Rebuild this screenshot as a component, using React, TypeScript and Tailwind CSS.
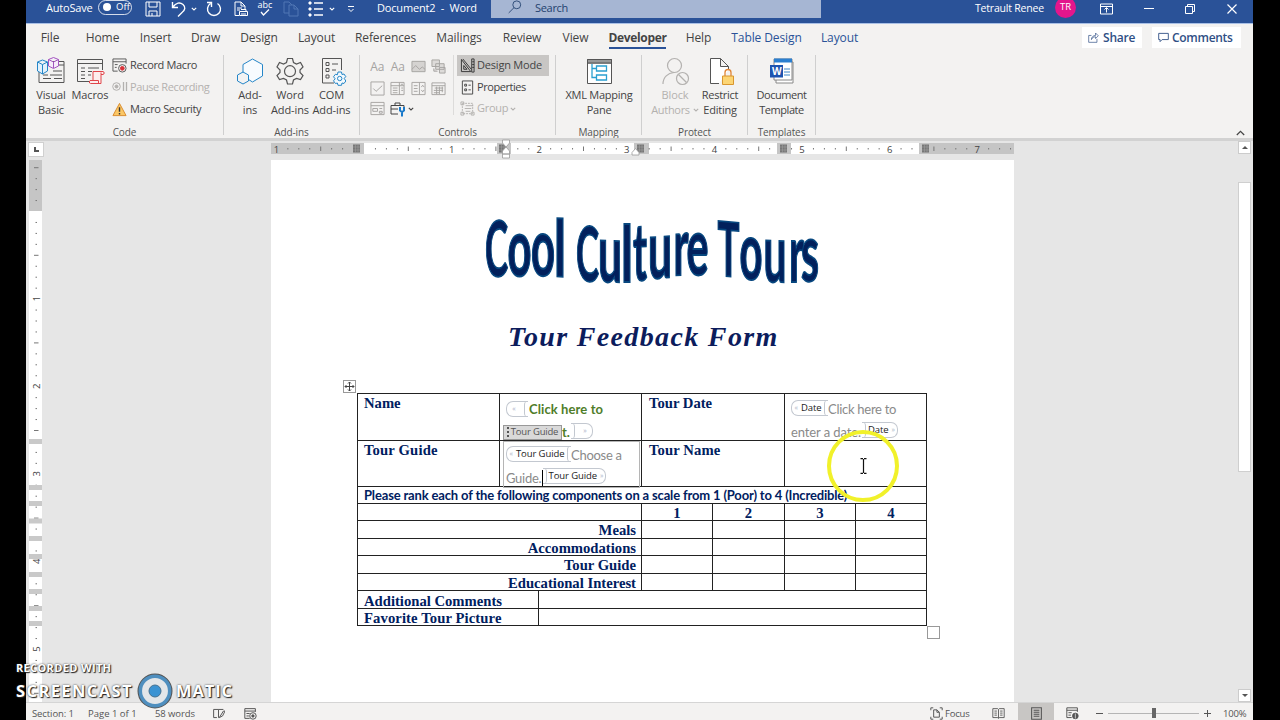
import React from 'react';

type IconProps = { className?: string; children: React.ReactNode; box?: string };

const Icon: React.FC<IconProps> = ({ className = '', children, box = '0 0 16 16' }) => (
   <svg
      viewBox={box}
      fill="none"
      stroke="currentColor"
      className={`shrink-0 ${className}`}
   >
      {children}
   </svg>
);

const Chevron: React.FC<{ className?: string }> = ({ className = '' }) => (
   <Icon box="0 0 6 6" className={`size-[6px] ${className}`}>
      <path d="M.8 1.8 3 4l2.2-2.2" strokeWidth="1.1" />
   </Icon>
);

// ---------- title bar ----------
const TitleBar: React.FC = () => (
   <div className="h-[24px] bg-[#2a5298] border-b border-[#a9c0e6] text-white text-[11px] flex shrink-0">
      <div className="flex h-[17px] items-center w-[465px]">
         <span className="ml-[20px] w-[46px] leading-[14px] -mt-[2px] tracking-[-0.2px] whitespace-nowrap">AutoSave</span>
         <div className="ml-[6px] -mt-[3px] h-[15px] w-[34px] rounded-full border border-white/80 flex items-center pl-[4px] shrink-0">
            <span className="size-[8px] rounded-full bg-white" />
            <span className="ml-[5px] text-[9.5px] leading-[12px]">Off</span>
         </div>
         <Icon className="ml-[13px] size-[16px]">
            <path d="M1 1h14v14H1zM4 1v5h8V1M4 15v-5h8v5M7 12v3" />
         </Icon>
         <Icon className="ml-[10px] size-[16px]">
            <path d="M1.500 1v5.500H7M2 6C5 1.500 9 1 12 3.500s2 6-1 8L7 15.500" strokeWidth="1.4" />
         </Icon>
         <Chevron className="ml-[4px]" />
         <Icon className="ml-[9px] size-[16px]">
            <path d="M4.500 2.500A6.500 6.500 0 1 0 11.500 2.500M1 1.500h4.500V6" strokeWidth="1.4" />
         </Icon>
         <Icon className="ml-[11px] size-[16px]">
            <path d="M6 14.500H2V1h6l4 4v3M8 1v4h4M4 7h5M4 9h3" />
            <path d="M6.500 10.500h8v4h-8zM8 8.500h5v2M8 13h5" />
         </Icon>
         <div className="ml-[9px] w-[14px] flex flex-col items-center">
            <span className="text-[9px] leading-[8px]">abc</span>
            <Icon box="0 0 10 7" className="h-[7px] w-[10px]">
               <path d="m1 3 2.500 3L9 .5" strokeWidth="1.300" />
            </Icon>
         </div>
         <Icon className="ml-[11px] size-[16px] text-[#5076b4]">
            <path d="M6 12H1V1h5l3 3M6 4h5l4 4v7H6zM11 4v4h4" />
         </Icon>
         <Icon className="ml-[9px] size-[16px]">
            <path d="M6 2h9M6 8h9M6 14h9" strokeWidth="1.4" />
            <path d="M1 1h2v2H1zM1 7h2v2H1zM1 13h2v2H1z" fill="currentColor" />
         </Icon>
         <Chevron className="ml-[5px]" />
         <Icon box="0 0 8 8" className="ml-[12px] size-[8px]">
            <path d="M1 1.500h6M1.500 4 4 6.500 6.500 4" />
         </Icon>
         <span className="ml-[22px] whitespace-nowrap leading-[14px] -mt-[2px] tracking-[-0.170px]">
            Document2&nbsp; -&nbsp; Word
         </span>
      </div>
      <div className="h-[18px] w-[330px] bg-[#a6b6d3] text-[#24426f] flex pl-[17px] shrink-0">
         <Icon className="size-[14px]">
            <circle cx="10" cy="5.500" r="4.500" />
            <path d="m6.800 8.800-6 6" />
         </Icon>
         <span className="ml-[13px] leading-[16px] tracking-[-0.300px]">Search</span>
      </div>
      <div className="ml-[154px] h-[17px] flex items-center">
         <span className="w-[69px] text-[10.500px] leading-[14px] -mt-[1px] tracking-[-0.200px] whitespace-nowrap">Tetrault Renee</span>
         <span className="ml-[11px] -mt-[2px] size-[21px] rounded-full bg-[#e3168c] text-[9.500px] flex items-center justify-center">
            TR
         </span>
         <Icon className="ml-[24px] h-[12px] w-[13px]" box="0 0 13 11">
            <path d="M.5.5h12v10H.5zM.5 3h12M6.500 9V4.500M4.500 6l2-2 2 2" />
         </Icon>
         <span className="ml-[31px] h-px w-[10px] bg-white" />
         <Icon className="ml-[31px] size-[10px]" box="0 0 10 10">
            <path d="M.5 2.500h7v7h-7zM2.500 2.500v-2h7v7h-2" />
         </Icon>
         <Icon className="ml-[32px] size-[10px]" box="0 0 10 10">
            <path d="m.5.5 9 9M9.500.5l-9 9" strokeWidth="1.200" />
         </Icon>
      </div>
   </div>
);

// ---------- tabs ----------
const tabs = [
   { name: 'File', cls: 'ml-[15px] w-[18px]' },
   { name: 'Home', cls: 'ml-[27px] w-[33px]' },
   { name: 'Insert', cls: 'ml-[21px] w-[31px]' },
   { name: 'Draw', cls: 'ml-[20px] w-[29px]' },
   { name: 'Design', cls: 'ml-[20px] w-[38px]' },
   { name: 'Layout', cls: 'ml-[20px] w-[37px]' },
   { name: 'References', cls: 'ml-[20px] w-[61px]' },
   { name: 'Mailings', cls: 'ml-[20px] w-[46px]' },
   { name: 'Review', cls: 'ml-[21px] w-[38px]' },
   { name: 'View', cls: 'ml-[21px] w-[27px]' },
   { name: 'Developer', cls: 'ml-[20px] w-[57px] font-bold tracking-[-0.35px] border-b-2 border-[#2a5298]' },
   { name: 'Help', cls: 'ml-[19px] w-[27px]' },
   { name: 'Table Design', cls: 'ml-[19px] w-[71px] text-[#2a5298]' },
   { name: 'Layout', cls: 'ml-[19px] w-[37px] text-[#2a5298]' },
];

const TabRow: React.FC = () => (
   <div className="h-[27px] flex shrink-0 text-[12px] text-[#444]">
      {tabs.map((tab, i) => (
         <div
            key={i}
            className={`h-[25px] leading-[28px] flex justify-center whitespace-nowrap tracking-[-0.1px] shrink-0 ${tab.cls}`}
         >
            {tab.name}
         </div>
      ))}
      <div className="ml-auto mt-[3px] mr-[12px] flex gap-[10px] text-[#2f4f85] font-semibold">
         <div className="h-[21px] w-[60px] bg-white flex items-center pl-[6px]">
            <Icon className="size-[11px]">
               <path d="M5 5H1v10h12v-5M5 11c0-4 3-6 6-6V1.500l4 4-4 4V7c-3 0-5 1-6 4z" />
            </Icon>
            <span className="ml-[4px] tracking-[-0.2px]">Share</span>
         </div>
         <div className="h-[21px] w-[89px] bg-white flex items-center pl-[6px]">
            <Icon className="size-[11px]">
               <path d="M1 2h14v9H6l-3 3v-3H1z" strokeWidth="1.300" />
            </Icon>
            <span className="ml-[3px] tracking-[-0.300px]">Comments</span>
         </div>
      </div>
   </div>
);

// ---------- ribbon ----------
type BigButtonProps = {
   lines: React.ReactNode[];
   className?: string;
   children: React.ReactNode;
};

const BigButton: React.FC<BigButtonProps> = ({ lines, className = '', children }) => (
   <div className={`flex flex-col items-center shrink-0 ${className}`}>
      <svg viewBox="0 0 30 30" fill="none" className="mt-[1px] size-[30px]">
         {children}
      </svg>
      <div className="mt-[2px] leading-[14.500px] text-center whitespace-nowrap">
         {lines.map((line, i) => (
            <p key={i}>{line}</p>
         ))}
      </div>
   </div>
);

type GroupProps = { label: string; className?: string; children: React.ReactNode };

const Group: React.FC<GroupProps> = ({ label, className = '', children }) => (
   <div className={`flex flex-col h-[80px] border-r border-[#cfcfcf] shrink-0 ${className}`}>
      <div className="flex h-[66px] shrink-0">{children}</div>
      <p className="mt-[4px] text-[10px] leading-[15px] text-center text-[#555]">{label}</p>
   </div>
);

const Ribbon: React.FC = () => (
   <div className="h-[87px] pt-[4px] flex shrink-0 text-[11px] tracking-[-0.100px] text-[#444]">
      <Group label="Code" className="w-[198px]">
         <BigButton lines={['Visual', 'Basic']} className="ml-[5px] w-[40px]">
            <path d="M3 12v14.500h25V5.500H17M12 9h16M17 15h9M7 19h5M14 19h12M7 22.500h8M18 22.500h8" stroke="#555" />
            <path d="m1.500 6 5-2 5 2v9l-5 3-5-3zM1.500 6l5 2.500 5-2.500M6.500 8.500V18" stroke="#2586c8" fill="#e3f1fb" />
            <path d="m12.500 3.500 5-2 5 2V10l-5 2.500-5-2.500zM12.500 3.500l5 2.500 5-2.500M17.500 6v6" stroke="#a355c0" fill="#f6ebfa" />
         </BigButton>
         <BigButton lines={['Macros']} className="w-[38px]">
            <path d="M15 25.500H2.500v-22h25V14M2.500 7.500h25M6 12h4M13 12h11M6 15.500h4M13 15.500h4M6 19h4M13 19h3M6 22.500h4" stroke="#555" />
            <path d="M18 15.500h10c1.500 0 1.500 3 0 3h-2v9H15.500c-1.500 0-1.500-3 0-3H18zM26 18.500v-2M15 24.500h8.500v3" stroke="#e0464b" fill="#fdeeee" />
         </BigButton>
         <div className="ml-[3px] flex flex-col">
            <div className="h-[21px] flex items-center gap-[3px] whitespace-nowrap">
               <Icon className="size-[15px]">
                  <path d="M6 14H1V1h14v5M1 4h14M3 7h3M3 10h2" stroke="#555" />
                  <circle cx="11" cy="11" r="4" stroke="#555" />
                  <circle cx="11" cy="11" r="2" fill="#d9333a" stroke="#d9333a" />
               </Icon>
               <span className="tracking-[-0.350px]">Record Macro</span>
            </div>
            <div className="h-[22px] flex items-center gap-[2px] whitespace-nowrap text-[#b3b1af]">
               <Icon className="size-[16px]">
                  <circle cx="4.500" cy="7.500" r="3.800" />
                  <circle cx="4.500" cy="7.500" r="1.500" fill="currentColor" />
                  <path d="M11.500 3v9M14.500 3v9" strokeWidth="1.300" />
               </Icon>
               <span className="tracking-[-0.400px]">Pause Recording</span>
            </div>
            <div className="h-[22px] flex items-center gap-[3px] whitespace-nowrap">
               <Icon className="size-[15px]">
                  <path d="M8 1.500 15 14.500H1z" fill="#fbc765" stroke="#d98a2b" />
                  <path d="M8 5.500v5M8 11.700v1.500" stroke="#333" strokeWidth="1.500" />
               </Icon>
               <span className="tracking-[-0.350px]">Macro Security</span>
            </div>
         </div>
      </Group>

      <Group label="Add-ins" className="w-[136px]">
         <BigButton lines={['Add-', 'ins']} className="ml-[6px] w-[40px]">
            <path d="M8 8.500 17.500 3l10 5.500V20l-10 6-9.500-6z" stroke="#2586c8" fill="#f7fbfe" />
            <path d="m8 16 5.500 3v6L8 28l-5.500-3v-6z" stroke="#2586c8" fill="#f3f3f3" />
         </BigButton>
         <BigButton lines={['Word', 'Add-ins']} className="w-[40px]">
            <path
               d="M12.500 2.500h5l1 4 3 1.500 4-1.500 2.500 4.500-3 3v2.500l3 3-2.500 4-4-1-3 1.500-1 4h-5l-1-4-3-1.500-4 1L2 19.500l3-3V14l-3-3 2.500-4.500 4 1.500 3-1.500z"
               stroke="#555"
               strokeWidth="1.200"
            />
            <circle cx="15" cy="15.200" r="5.500" stroke="#555" strokeWidth="1.200" />
         </BigButton>
         <BigButton lines={['COM', 'Add-ins']} className="w-[43px]">
            <path d="M17 27H5.500V2.500h19V14M9 6.500h3v3H9zM9 12.500h3v3H9zM9 19h3v3H9zM15 8h6M15 14h4" stroke="#555" />
            <path
               d="M21 16h3.500l.5 2.500 2-.5 1.800 2.700-1.600 1.600L28.800 25 27 27.500l-2-.5-.5 2.300H21l-.6-2.300-2 .5-1.900-2.700 1.700-2-1.700-2 1.900-2.500 2 .5z"
               stroke="#2586c8"
               fill="#f3f9fd"
            />
            <circle cx="22.700" cy="22.500" r="2.200" stroke="#2586c8" />
         </BigButton>
      </Group>

      <Group label="Controls" className="w-[196px]">
         <div className="ml-[7px] grid grid-cols-4 w-[82px] h-[64px] place-items-center text-[#a5a3a1]">
            <span className="text-[12px]">Aa</span>
            <span className="text-[12px]">Aa</span>
            <Icon className="size-[15px]">
               <path d="M1 2.500h14v11H1zM1 11l4-4 4 4 3-2.500 3 2.500" fill="#d5d3d1" />
            </Icon>
            <Icon className="size-[15px]">
               <path d="M1 1h8v7H1zM5 5h9v6H5zM9 9h6v6H9zM3 10v3h4" fill="#dddbd9" />
            </Icon>
            <Icon className="size-[15px]">
               <path d="M1 1h14v14H1zM3.500 8l3 3L13 5" />
            </Icon>
            <Icon className="size-[15px]">
               <path d="M1 1.500h14v13H1zM1 5h14M10 1.500v13M3 7.500h5M3 10h5M3 12.500h5M12 7.500h2M12 10h2M11.500 3.500h2.500" />
            </Icon>
            <Icon className="size-[15px]">
               <path d="M1 1.500h14v13H1zM9 1.500v13M3 5h4M3 8h4M3 11h4M11 6.500l1.500-2 1.500 2M11 9.500l1.500 2 1.500-2" />
            </Icon>
            <Icon className="size-[15px]">
               <path d="M1 2h14v12.500H1zM1 5h14M4 7.500h9M3 10h10M3 12.500h6M6 6v8M9 6v8M12 6v6" />
            </Icon>
            <Icon className="size-[15px]">
               <path d="M1 1.500h14v13H1zM1 5h14M3 8h5v3H3zM10 8h3M10 11h3v2h-3z" />
            </Icon>
            <Icon className="size-[16px]">
               <path d="M8 13H1V4.500h13V7M5 4.500V2h5v2.500M1 8h7" stroke="#444" />
               <path d="M10 6v3.500l2 1.500 2-1.500V6M12 11v4.500" stroke="#1979ca" strokeWidth="2" />
            </Icon>
            <Chevron className="justify-self-start text-[#444]" />
         </div>
         <span className="ml-[4px] w-px h-[60px] bg-[#dcdbda]" />
         <div className="ml-[3px] flex flex-col whitespace-nowrap">
            <div className="h-[21px] w-[92px] bg-[#c8c6c4] flex items-center pl-[3px] gap-[2px]">
               <Icon className="size-[15px] text-[#333]">
                  <path d="M1.500 1.500v13h10zM4 8v4h3.500z" />
                  <path d="m3 1 9 11M12.500 1h2.500v14h-2.500zM13 4h2M13 7h2M13 10h2" />
               </Icon>
               <span className="tracking-[-0.200px]">Design Mode</span>
            </div>
            <div className="h-[22px] flex items-center pl-[3px] gap-[2px]">
               <Icon className="size-[15px]">
                  <path d="M2.500 1h11v14h-11zM5 4.500h2v2H5zM5 9.500h2v2H5zM9 5.500h2.500M9 10.500h2.500" />
               </Icon>
               <span className="tracking-[-0.450px]">Properties</span>
            </div>
            <div className="h-[21px] flex items-center pl-[3px] gap-[2px] text-[#b3b1af]">
               <Icon className="size-[15px]">
                  <path d="M2.500 2.500h11v11h-11z" strokeDasharray="2 1" />
                  <path d="M1 1h3v3H1zM12 12h3v3h-3zM1 12h3v3H1zM6 5h8M5 8h7M6 11h5" />
               </Icon>
               <span className="tracking-[-0.300px]">Group</span>
               <Chevron />
            </div>
         </div>
      </Group>

      <Group label="Mapping" className="w-[86px]">
         <BigButton lines={['XML Mapping', 'Pane']} className="w-[86px] tracking-[-0.250px]">
            <path d="M3.500 3.500h24v24h-24zM3.500 7h24" stroke="#555" fill="#fff" />
            <path d="M3.500 3.500h24V7h-24z" fill="#999" stroke="#555" />
            <path d="M12.500 10h10v5h-10zM12.500 19h10v5h-10zM8 8v13.500h4.500M8 12.500h4.500" stroke="#2a9fd0" strokeWidth="1.300" />
         </BigButton>
      </Group>

      <Group label="Protect" className="w-[106px]">
         <BigButton
            lines={[
               'Block',
               <span className="flex items-center gap-[3px] tracking-[-0.300px]">
                  Authors <Chevron />
               </span>,
            ]}
            className="ml-[8px] w-[50px] text-[#b3b1af]"
         >
            <circle cx="14.500" cy="9.500" r="7" stroke="#b3b1af" strokeWidth="1.200" />
            <path d="M3 28c0-7 5-11 11-11.500" stroke="#b3b1af" strokeWidth="1.200" />
            <circle cx="22.500" cy="22.500" r="6" stroke="#b3b1af" strokeWidth="1.200" />
            <path d="m18.500 18.500 8 8" stroke="#b3b1af" strokeWidth="1.200" />
         </BigButton>
         <BigButton lines={['Restrict', 'Editing']} className="w-[40px] tracking-[-0.250px]">
            <path d="M14 27.500H5.500v-25h10l8 8V14M15.500 2.500v8h8" stroke="#555" fill="#fff" />
            <path d="M20 20v-3.500c0-4 6-4 6 0V20" stroke="#e08638" strokeWidth="1.300" />
            <path d="M17.500 20h11v8.500h-11z" stroke="#d9962f" fill="#fcd574" />
         </BigButton>
      </Group>

      <Group label="Templates" className="w-[68px]">
         <BigButton lines={['Document', 'Template']} className="w-[67px] tracking-[-0.450px]">
            <path d="M9 6h17v21H9z" fill="#fff" stroke="#888" />
            <path d="M7 3h18v21H7z" fill="#fff" stroke="#888" />
            <path d="M7 2.500h18v4H7z" fill="#2b7fd0" />
            <path d="M17 13h6M17 16h6M17 19h6" stroke="#3d86c8" />
            <path d="M3 9h13v12.500H3z" fill="#1d54b0" />
            <text x="9.500" y="18.800" textAnchor="middle" fill="#fff" fontSize="10" fontWeight="700">
               W
            </text>
         </BigButton>
      </Group>
      <Icon className="ml-auto self-end mr-[8px] mb-[2px] w-[9px] h-[6px] text-[#444]" box="0 0 9 6">
         <path d="m.8 5 3.700-3.700L8.200 5" strokeWidth="1.200" />
      </Icon>
   </div>
);

// ---------- rulers ----------
const INCH = 87.6;
const range = (n: number) => Array.from({ length: n }, (_, i) => i);

const HorizontalRuler: React.FC = () => {
   const zero = 93;
   return (
      <svg width="743" height="18" className="block overflow-visible">
         <rect y="2" width="743" height="11" fill="#c5c5c5" />
         <rect x="93" y="2" width="134" height="11" fill="#fff" />
         <rect x="240" y="2" width="123" height="11" fill="#fff" />
         <rect x="378" y="2" width="128" height="11" fill="#fff" />
         <rect x="520" y="2" width="128" height="11" fill="#fff" />
         {range(68).map(i => {
            const x = zero + ((i - 8) * INCH) / 8;
            if (x > 742) return null;
            if (i % 8 === 0) {
               if (i === 8) return null;
               return (
                  <text key={i} x={x} y="11.500" textAnchor="middle" fontSize="9.500" fill="#444">
                     {Math.abs(i / 8 - 1)}
                  </text>
               );
            }
            return (
               <rect key={i} x={x} y={i % 4 ? 7 : 5.500} width="1" height={i % 4 ? 1.500 : 4.500} fill="#777" />
            );
         })}
         {[82, 228, 366, 509, 651].map(x => (
            <g key={x}>
               <rect x={x - 2} y="2" width="12" height="11" fill="#c5c5c5" />
               <rect x={x} y="3.500" width="7" height="8" fill="#777" />
               <path d={`M${x} 6h7M${x} 9h7M${x + 2.500} 3.500v8M${x + 5} 3.500v8`} stroke="#a5a5a5" strokeWidth=".5" />
            </g>
         ))}
         <path d="M231.500-1h7v3l-3.500 4-3.500-4zM231.500 13V10l3.500-4 3.500 4v3zM231.500 13h7v4h-7z" fill="#fff" stroke="#999" strokeWidth=".8" />
         <path d="M361 14v-2.500l3.500-4 3.500 4V14z" fill="#fff" stroke="#999" strokeWidth=".8" />
      </svg>
   );
};

const rowMarks = [282, 328, 344, 361.500, 379, 397, 415, 432, 449, 464];

const VerticalRuler: React.FC = () => {
   const zero = 51;
   return (
      <svg width="13" height="542" className="block">
         <rect width="13" height="542" fill="#fff" />
         <rect width="13" height={zero} fill="#c5c5c5" />
         {range(50).map(i => {
            const y = zero + ((i - 4) * INCH) / 8;
            if (i === 4) return null;
            if (i > 4 && (i - 4) % 8 === 0) {
               return (
                  <text
                     key={i}
                     x="6.500"
                     y={y}
                     textAnchor="middle"
                     fontSize="9.500"
                     fill="#444"
                     transform={`rotate(-90 6.500 ${y})`}
                     dy="4.500"
                  >
                     {(i - 4) / 8}
                  </text>
               );
            }
            const half = i % 4 === 0;
            return (
               <rect key={i} x={half ? 5 : 6.500} y={y} width={half ? 4.500 : 1.500} height="1" fill="#777" />
            );
         })}
         {rowMarks.map(y => (
            <rect key={y} y={y - 3} width="13" height="5" fill="#c9c9c9" />
         ))}
      </svg>
   );
};

// ---------- document ----------
// [letter, centre x, baseline, drawn width, vertical stretch, shear]
const wordArt: [string, number, number, number, number, number][] = [
   ['C', 496.500, 276.500, 23, 1.370, -4],
   ['o', 519.500, 275.500, 24, 1.430, 0],
   ['o', 543, 275.800, 24, 1.430, 1],
   ['l', 560, 276.500, 12, 1.400, 3],
   ['C', 587.500, 281, 23, 1.350, 3],
   ['u', 610, 282, 24, 1.430, 2],
   ['l', 627, 281.500, 12, 1.400, 0],
   ['t', 640, 280.500, 14, 1.430, -3],
   ['u', 660, 278, 24, 1.430, -4],
   ['r', 681, 275, 15, 1.430, -3],
   ['e', 697.500, 274.500, 22, 1.430, 0],
   ['T', 728.500, 276.500, 22, 1.350, 5],
   ['o', 751, 279.500, 23, 1.430, 4],
   ['u', 775, 281.800, 23, 1.430, 2],
   ['r', 796.500, 281.800, 15, 1.430, 0],
   ['s', 810, 281.300, 18, 1.430, -2],
];

const WordArt: React.FC = () => (
   <svg viewBox="480 210 345 80" className="w-[345px] h-[80px] ml-[209px] block overflow-visible">
      {wordArt.map(([ch, x, y, w, stretch, shear], i) => (
         <text
            key={i}
            transform={`translate(${x} ${y}) skewY(${shear}) scale(1 ${stretch})`}
            x={-w / 2}
            textLength={w}
            lengthAdjust="spacingAndGlyphs"
            fontSize="56"
            fill="#02205c"
            stroke="#07477f"
            strokeWidth="1.300"
            className="font-['Lato'] font-bold"
         >
            {ch}
         </text>
      ))}
   </svg>
);

// content control tag: rounded outside, concave on the side that faces the text
const Tag: React.FC<{ text?: string; side: 'start' | 'end'; className?: string }> = ({
   text,
   side,
   className = '',
}) => (
   <span
      className={`inline-flex items-center h-[16px] border-y border-[#c3c8d0] bg-white font-['Open_Sans'] font-normal text-[9.500px] tracking-[-0.100px] text-[#222] whitespace-nowrap shrink-0 ${
         side === 'start' ? 'rounded-l-[7px] border-l' : 'rounded-r-[7px] border-r'
      } ${className}`}
   >
      {side === 'end' && (
         <span className="-my-px h-[16px] w-[4px] rounded-r-[4px] border-r border-[#c3c8d0] shrink-0" />
      )}
      <span className="flex-1 flex items-center justify-center">
         {side === 'start' && <span className="text-[7px] text-[#a9b3c6] mr-[3px]">«</span>}
         {text}
         {side === 'end' && <span className="text-[7px] text-[#a9b3c6] ml-[3px]">»</span>}
      </span>
      {side === 'start' && (
         <span className="-my-px h-[16px] w-[4px] rounded-l-[4px] border-l border-[#c3c8d0] shrink-0" />
      )}
   </span>
);

const Cell: React.FC<{ className?: string; children?: React.ReactNode }> = ({
   className = '',
   children,
}) => <div className={`border-r border-b border-[#222] shrink-0 ${className}`}>{children}</div>;

const ratings = [
   { label: 'Meals', h: 'h-[18px]' },
   { label: 'Accommodations', h: 'h-[17px]' },
   { label: 'Tour Guide', h: 'h-[18px]' },
   { label: 'Educational Interest', h: 'h-[17px]' },
];
const ratingCols = ['w-[71px]', 'w-[72px]', 'w-[71px]', 'w-[71px]'];

const FeedbackTable: React.FC = () => (
   <div className="ml-[86px] w-[570px] border-l border-t border-[#222] font-['Liberation_Serif'] font-bold text-[14.670px] leading-[18px] text-[#002060]">
      <div className="flex h-[47px]">
         <Cell className="w-[142px] pl-[6px]">Name</Cell>
         <Cell className="w-[142px] pl-[6px] pt-[6px] font-['Lato'] text-[13px] text-[#4f7d2a]">
            <div className="flex items-center h-[18px] whitespace-nowrap">
               <Tag side="start" className="w-[22px]" />
               <span className="ml-px tracking-[0.100px]">Click here to</span>
            </div>
            <div className="flex items-center h-[22px] mt-[3px] whitespace-nowrap">
               <span className="-ml-[3px] h-[15px] w-[59px] bg-[#d9d9d9] border border-[#999] font-['Open_Sans'] font-normal text-[9.500px] tracking-[-0.200px] text-[#555] flex items-center justify-center gap-[2px] shrink-0">
                  <svg viewBox="0 0 2 10" className="w-[2px] h-[10px]" fill="#555">
                     <path d="M0 0h2v2H0zM0 4h2v2H0zM0 8h2v2H0z" />
                  </svg>
                  Tour Guide
               </span>
               <span>t.</span>
               <Tag side="end" className="w-[22px] -mt-[3px] ml-[1px]" />
            </div>
         </Cell>
         <Cell className="w-[143px] pl-[7px]">Tour Date</Cell>
         <Cell className="w-[142px] pl-[6px] pt-[6px] font-['Lato'] font-normal text-[13px] tracking-[-0.280px] text-[#8a8a8a]">
            <div className="flex items-center h-[18px] whitespace-nowrap">
               <Tag side="start" text="Date" className="w-[37px] -mt-[3px]" />
               <span>Click here to</span>
            </div>
            <div className="flex items-center h-[18px] mt-[5px] whitespace-nowrap">
               <span className="w-[71px] tracking-[-0.100px]">enter a date.</span>
               <Tag side="end" text="Date" className="w-[36px] -mt-[4px]" />
            </div>
         </Cell>
      </div>
      <div className="flex h-[46px]">
         <Cell className="w-[142px] pl-[6px] tracking-[0.150px]">Tour Guide</Cell>
         <Cell className="w-[142px] pl-[3px] font-['Lato'] font-normal text-[13px] text-[#8a8a8a] tracking-[-0.280px]">
            <div className="w-[137px] h-[47px] border border-[#b5b5b5] pl-[2px] pt-[4px]">
               <div className="flex items-center h-[18px] whitespace-nowrap">
                  <Tag side="start" text="Tour Guide" className="w-[65px] -mt-[2px]" />
                  <span>Choose a</span>
               </div>
               <div className="flex items-center h-[18px] mt-[5px] whitespace-nowrap">
                  <span className="w-[36px]">Guide.</span>
                  <span className="w-px h-[16px] bg-black" />
                  <Tag side="end" text="Tour Guide" className="w-[63px] -mt-[4px]" />
               </div>
            </div>
         </Cell>
         <Cell className="w-[143px] pl-[7px] tracking-[0.100px]">Tour Name</Cell>
         <Cell className="w-[142px]" />
      </div>
      <Cell className="h-[17px] pl-[6px] font-['Lato'] text-[13px] leading-[17px] tracking-[-0.160px] whitespace-nowrap">
         Please rank each of the following components on a scale from 1 (Poor) to 4 (Incredible)
      </Cell>
      <div className="flex h-[17px] text-center">
         <Cell className="w-[284px]" />
         {ratingCols.map((w, i) => (
            <Cell key={i} className={w}>
               {i + 1}
            </Cell>
         ))}
      </div>
      {ratings.map(row => (
         <div key={row.label} className={`flex ${row.h}`}>
            <Cell className="w-[284px] pr-[5px] text-right">{row.label}</Cell>
            {ratingCols.map((w, i) => (
               <Cell key={i} className={w} />
            ))}
         </div>
      ))}
      <div className="flex h-[18px]">
         <Cell className="w-[181px] pl-[6px] pt-px">Additional Comments</Cell>
         <Cell className="w-[388px]" />
      </div>
      <div className="flex h-[17px]">
         <Cell className="w-[181px] pl-[6px] tracking-[0.100px]">Favorite Tour Picture</Cell>
         <Cell className="w-[388px]" />
      </div>
   </div>
);

const Page: React.FC = () => (
   <div className="w-[743px] h-[542px] bg-white pt-[50px]">
      <WordArt />
      <p className="mt-[28px] h-[39px] leading-[38px] ml-[237px] w-[270px] whitespace-nowrap font-['Liberation_Serif'] italic font-bold text-[28px] tracking-[1.350px] text-[#0c1c5c]">
         Tour Feedback Form
      </p>
      <div className="mt-[23px] ml-[72px] size-[13px] border border-[#999] bg-white">
         <Icon className="size-[11px] text-[#444]" box="0 0 11 11">
            <path d="M5.500 1v9M1 5.500h9M4 2.500l1.500-1.500L7 2.500M4 8.500 5.500 10 7 8.500M2.500 4 1 5.500 2.500 7M8.500 4 10 5.500 8.500 7" />
         </Icon>
      </div>
      <FeedbackTable />
      <div className="ml-[656px] size-[13px] border border-[#999]" />
   </div>
);

const Workspace: React.FC = () => (
   <div className="h-[564px] bg-[#e6e6e6] border-t-3 border-[#d2d2d2] flex shrink-0">
      <div className="w-[20px] shrink-0 pl-[3px] pt-[1px]">
         <div className="-ml-[1px] w-[16px] h-[15px] bg-white border border-[#d0d0d0] flex items-center justify-center">
            <span className="w-[5px] h-[5px] border-l-2 border-b-2 border-[#555]" />
         </div>
         <div className="mt-[3px]">
            <VerticalRuler />
         </div>
      </div>
      <div className="ml-[225px]">
         <div className="h-[19px]">
            <HorizontalRuler />
         </div>
         <Page />
      </div>
      <div className="ml-auto mr-[2px] w-[13px] flex flex-col">
         <div className="h-[13px] bg-white border border-[#ccc] flex items-center justify-center">
            <span className="border-x-3 border-b-3 border-x-transparent border-b-[#555]" />
         </div>
         <div className="h-[28px]" />
         <div className="h-[290px] bg-white border border-[#cfcfcf]" />
         <div className="mt-auto h-[13px] bg-white border border-[#ccc] flex items-center justify-center">
            <span className="border-x-3 border-t-3 border-x-transparent border-t-[#555]" />
         </div>
      </div>
   </div>
);

// ---------- status bar ----------
const StatusBar: React.FC = () => (
   <div className="h-[18px] pt-[3px] bg-[#f3f2f1] border-t border-[#d5d5d5] flex items-center text-[9.500px] leading-[13px] tracking-[-0.100px] text-[#555] whitespace-nowrap">
      <span className="ml-[6px] w-[42px]">Section: 1</span>
      <span className="ml-[14px] w-[50px] tracking-[0]">Page 1 of 1</span>
      <span className="ml-[17px] w-[41px]">58 words</span>
      <Icon className="ml-[16px] size-[13px]">
         <path d="M8 3H2v10h4M8 3v10M8 3h6M8 13h1M14 5l-5 8 4-2 3-6z" strokeWidth="1.200" />
      </Icon>
      <Icon className="ml-[19px] size-[13px]">
         <path d="M7 14H1V2h13v4M1 5h13M3 8h4M3 11h3" strokeWidth="1.200" />
         <circle cx="11" cy="11" r="4" strokeWidth="1.200" />
         <circle cx="11" cy="11" r="1.500" fill="currentColor" />
      </Icon>
      <Icon className="ml-[673px] size-[13px]">
         <path d="M1 4V1h3M12 1h3v3M1 12v3h3M12 15h3v-3M4.500 3.500h4l3 3v6h-7zM8.500 3.500v3h3" strokeWidth="1.200" />
      </Icon>
      <span className="ml-[2px] w-[24px] tracking-[-0.200px]">Focus</span>
      <Icon className="ml-[23px] size-[13px]">
         <path d="M8 3v11M1 2h6l1 1 1-1h6v11H9l-1 1-1-1H1zM3 5h3M3 7.500h3M3 10h3M10 5h3M10 7.500h3M10 10h3" strokeWidth="1.100" />
      </Icon>
      <span className="ml-[13px] -mt-[3px] w-[36px] h-[17px] pt-[3px] bg-[#c8c6c4] flex items-center justify-center">
         <Icon className="size-[13px]">
            <path d="M2 1h12v14H2zM4.500 4h7M4.500 6.500h7M4.500 9h7M4.500 11.500h7" strokeWidth="1.300" />
         </Icon>
      </span>
      <Icon className="ml-[12px] size-[13px]">
         <path d="M7 13H1V1h13v5M1 4h13M3 7h4M3 10h3" strokeWidth="1.200" />
         <circle cx="11.500" cy="11" r="3.500" fill="currentColor" />
         <path d="M11.500 8v6" stroke="#ddd" />
      </Icon>
      <span className="ml-[17px] h-px w-[7px] bg-[#555]" />
      <div className="ml-[5px] w-[91px] flex items-center">
         <span className="h-px flex-1 bg-[#b5b5b5]" />
         <span className="h-[10px] w-[4px] bg-[#666]" />
         <span className="h-px flex-1 bg-[#b5b5b5]" />
      </div>
      <Icon className="ml-[5px] size-[7px]" box="0 0 7 7">
         <path d="M3.500 0v7M0 3.500h7" />
      </Icon>
      <span className="ml-[12px] tracking-[-0.200px]">100%</span>
   </div>
);

const Watermark: React.FC = () => (
   <div className="absolute left-[16px] top-[659px] text-white font-bold [text-shadow:1px_1px_1px_#222,0_0_2px_#333]">
      <p className="text-[11px] leading-[18px] tracking-[0.350px]">RECORDED WITH</p>
      <div className="flex items-center h-[28px] text-[16.500px]">
         <span className="w-[117px] tracking-[1.400px]">SCREENCAST</span>
         <svg viewBox="0 0 36 36" className="ml-[4px] size-[36px]">
            <circle cx="18" cy="18" r="15" fill="none" stroke="#555" strokeWidth="5" />
            <circle cx="18" cy="18" r="14.700" fill="#e3e6e9" stroke="#4f8fbf" strokeWidth="3.500" />
            <circle cx="18" cy="18" r="6" fill="#3b93d3" stroke="#45708f" />
         </svg>
         <span className="ml-[3px] tracking-[0.900px]">MATIC</span>
      </div>
   </div>
);

const Pointer: React.FC = () => (
   <div className="absolute left-[827px] top-[430px] size-[72px] rounded-full border-[4px] border-[#f1f12a] flex items-center justify-center">
      <svg viewBox="0 0 7 16" className="w-[7px] h-[16px]" fill="none" stroke="#111" strokeWidth="1.200">
         <path d="M.5.600h2.500M4 .600h2.500M3.500 1v14M.5 15.400h2.500M4 15.400h2.500" />
      </svg>
   </div>
);

export default function App() {
   return (
      <div className="relative w-[1280px] h-[720px] overflow-hidden bg-black px-[26px] font-['Open_Sans',sans-serif]">
         <div className="w-[1227px] h-[720px] flex flex-col bg-[#f3f2f1]">
            <TitleBar />
            <TabRow />
            <Ribbon />
            <Workspace />
            <StatusBar />
         </div>
         <Pointer />
         <Watermark />
      </div>
   );
}
